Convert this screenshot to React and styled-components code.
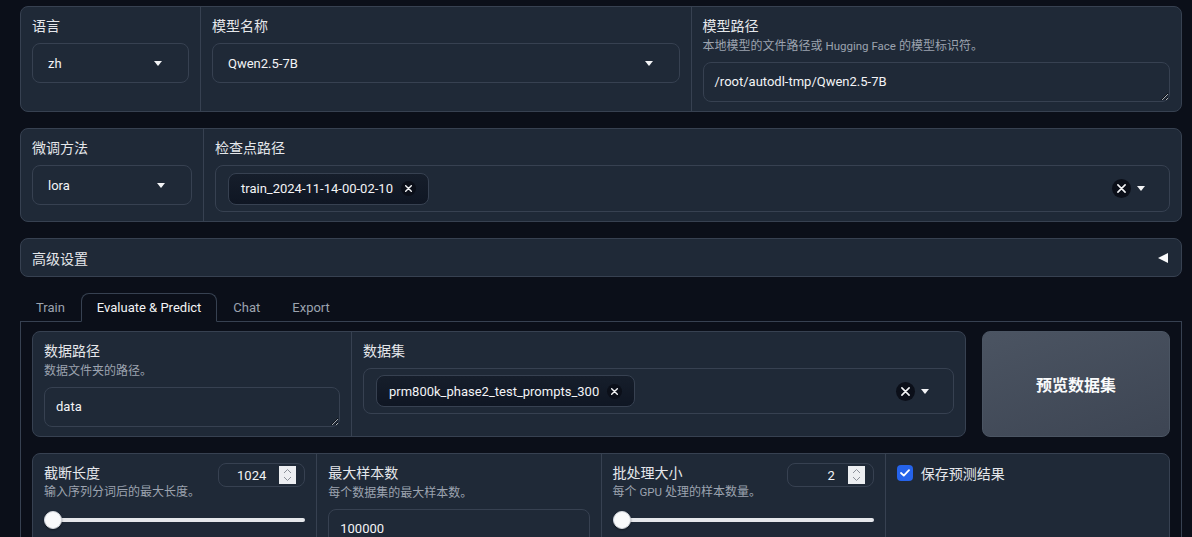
import React from 'react'
import styled, { createGlobalStyle } from 'styled-components'

const GlobalStyle = createGlobalStyle`
  * { box-sizing: border-box; }
  body {
    margin: 0;
    background: #0b0f19;
    font-family: Roboto, "Noto Sans CJK SC", sans-serif;
    color: #e5e7eb;
  }
`

const Page = styled.div`
  height: 537px;
  overflow: hidden;
  padding: 6px 10px 0 20px;
  display: flex;
  flex-direction: column;
  gap: 16px;
  & > * {
    flex-shrink: 0;
  }
`

const Block = styled.div`
  display: flex;
  background: #1f2937;
  border: 1px solid #374151;
  border-radius: 8px;
  overflow: hidden;
  flex: ${props => props.$grow ? '1 1 0' : 'none'};
  min-width: 0;
`

const Col = styled.div`
  flex: ${props => props.$w ? `0 0 ${props.$w}px` : '1 1 0'};
  min-width: 0;
  padding: 9px 11px 9px 11px;
  display: flex;
  flex-direction: column;
  & + & {
    border-left: 1px solid #374151;
  }
`

const Head = styled.div`
  display: flex;
  justify-content: space-between;
  align-items: flex-start;
`

const Label = styled.div`
  font-size: 14px;
  line-height: 20px;
  color: #e5e7eb;
  margin-bottom: ${props => props.$info ? 0 : 7}px;
`

const Info = styled.div`
  font-size: 12px;
  line-height: 16px;
  color: #9ca3af;
  margin-top: ${props => props.$pull ? -3 : 2}px;
  margin-bottom: 8px;
`

const Latin = styled.span`
  font-size: 11.5px;
`

const Select = styled.div`
  height: 40px;
  border: 1px solid #374151;
  border-radius: 8px;
  padding: 0 26px 0 15px;
  display: flex;
  align-items: center;
  justify-content: space-between;
  font-size: 13px;
  color: #f3f4f6;
`

const Caret = styled.span`
  flex: none;
  width: 0;
  height: 0;
  border-left: 4.5px solid transparent;
  border-right: 4.5px solid transparent;
  border-top: 5px solid #f3f4f6;
  margin-left: ${props => props.$gap || 0}px;
`

const TextArea = styled.textarea`
  display: block;
  width: 100%;
  height: 40px;
  min-height: 40px;
  background: #1f2937;
  border: 1px solid #374151;
  border-radius: 8px;
  padding: 9px 11px;
  font: inherit;
  font-size: 13px;
  line-height: 20px;
  color: #f3f4f6;
  resize: vertical;
  outline: none;
  color-scheme: dark;
  overflow: hidden;
`

const Multi = styled.div`
  height: ${props => props.$h}px;
  border: 1px solid #374151;
  border-radius: 8px;
  padding: 0 24px 0 12px;
  display: flex;
  align-items: center;
`

const Chip = styled.div`
  height: 32px;
  display: flex;
  align-items: center;
  gap: 8px;
  padding: 0 12px;
  border: 1px solid #374151;
  border-radius: 8px;
  background: linear-gradient(180deg, #161e2b, #0f1623);
  font-size: 13px;
  color: #f3f4f6;
`

const ChipX = styled.span`
  width: 15px;
  height: 15px;
  border-radius: 50%;
  background: #0b0f19;
  display: flex;
  align-items: center;
  justify-content: center;
`

const ClearAll = styled.span`
  margin-left: auto;
  width: 19px;
  height: 19px;
  border-radius: 50%;
  background: #0b0f19;
  display: flex;
  align-items: center;
  justify-content: center;
`

const Accordion = styled.div`
  height: 39px;
  background: #1f2937;
  border: 1px solid #374151;
  border-radius: 8px;
  padding: 0 13px 0 11px;
  display: flex;
  align-items: center;
  justify-content: space-between;
  font-size: 14px;
`

const LeftArrow = styled.span`
  width: 0;
  height: 0;
  border-top: 5.5px solid transparent;
  border-bottom: 5.5px solid transparent;
  border-right: 10px solid #f9fafb;
`

const Tabs = styled.div`
  display: flex;
  flex-direction: column;
`

const TabNav = styled.div`
  display: flex;
  align-items: flex-start;
  height: 29px;
  border-bottom: 1px solid #374151;
`

const Tab = styled.div`
  height: ${props => props.$active ? 29 : 28}px;
  padding: 0 15px;
  display: flex;
  align-items: center;
  font-size: 13px;
  color: ${props => props.$active ? '#f3f4f6' : '#9ca3af'};
  border: 1px solid ${props => props.$active ? '#374151' : 'transparent'};
  border-bottom: ${props => props.$active ? '1px solid #0b0f19' : 'none'};
  border-radius: 8px 8px 0 0;
  background: ${props => props.$active ? '#0b0f19' : 'transparent'};
  margin-bottom: ${props => props.$active ? -1 : 0}px;
`

const TabPanel = styled.div`
  border: 1px solid #374151;
  border-top: none;
  padding: 9px 11px 20px 11px;
  display: flex;
  flex-direction: column;
  gap: 16px;
`

const Row = styled.div`
  display: flex;
  gap: 16px;
`

const ActionButton = styled.button`
  flex: 0 0 188px;
  border: 1px solid #4b5563;
  border-radius: 8px;
  background: linear-gradient(160deg, #4b5462 0%, #3d4553 100%);
  color: #f9fafb;
  font-family: inherit;
  font-size: 16px;
  font-weight: 700;
`

const NumberBox = styled.div`
  width: 87px;
  height: 24px;
  border: 1px solid #374151;
  border-radius: 8px;
  display: flex;
  align-items: center;
  justify-content: flex-end;
  padding-right: 8px;
  gap: 13px;
  font-size: 13px;
  color: #f3f4f6;
`

const Spinner = styled.span`
  width: 17px;
  height: 18px;
  background: #eceef1;
  display: flex;
  align-items: center;
  justify-content: center;
`

const SliderWrap = styled.div`
  margin-top: 2px;
  height: 20px;
  position: relative;
  display: flex;
  align-items: center;
`

const Track = styled.div`
  width: 100%;
  height: 4px;
  border-radius: 2px;
  background: linear-gradient(90deg, #2563eb 0 6px, #e5e7eb 6px);
`

const Thumb = styled.span`
  position: absolute;
  left: 0;
  top: 1px;
  width: 18px;
  height: 18px;
  border-radius: 50%;
  background: #f9fafb;
  border: 1px solid #d1d5db;
  box-shadow: 0 1px 2px rgba(0, 0, 0, 0.4);
`

const CheckRow = styled.label`
  display: flex;
  align-items: center;
  gap: 8px;
  height: 20px;
  font-size: 14px;
  color: #e5e7eb;
`

const CheckBox = styled.span`
  width: 16px;
  height: 16px;
  border-radius: 4px;
  background: #2563eb;
  display: flex;
  align-items: center;
  justify-content: center;
`

function XMark({ size = 7, width = 1.6 }) {
  return (
    <svg width={size} height={size} viewBox="0 0 10 10">
      <path d="M1 1L9 9M9 1L1 9" stroke="#f3f4f6" strokeWidth={width * 10 / size} strokeLinecap="round" />
    </svg>
  )
}

function Dropdown({ value }) {
  return (
    <Select>
      <span>{value}</span>
      <Caret />
    </Select>
  )
}

function MultiSelect({ value, height }) {
  return (
    <Multi $h={height}>
      <Chip>
        {value}
        <ChipX><XMark size={7} width={1.4} /></ChipX>
      </Chip>
      <ClearAll><XMark size={9} width={1.6} /></ClearAll>
      <Caret $gap={6} />
    </Multi>
  )
}

function NumberInput({ value }) {
  return (
    <NumberBox>
      {value}
      <Spinner>
        <svg width="9" height="14" viewBox="0 0 9 14">
          <path d="M1 5L4.5 1.5L8 5M1 9L4.5 12.5L8 9" stroke="#8b9099" strokeWidth="1" fill="none" />
        </svg>
      </Spinner>
    </NumberBox>
  )
}

function Slider() {
  return (
    <SliderWrap>
      <Track />
      <Thumb />
    </SliderWrap>
  )
}

export default function App() {
  return (
    <>
      <GlobalStyle />
      <Page>
        <Block>
          <Col $w={179}>
            <Label>语言</Label>
            <Dropdown value="zh" />
          </Col>
          <Col>
            <Label>模型名称</Label>
            <Dropdown value="Qwen2.5-7B" />
          </Col>
          <Col>
            <Label $info>模型路径</Label>
            <Info>本地模型的文件路径或 <Latin>Hugging Face</Latin> 的模型标识符。</Info>
            <TextArea readOnly defaultValue="/root/autodl-tmp/Qwen2.5-7B" />
          </Col>
        </Block>

        <Block>
          <Col $w={182}>
            <Label>微调方法</Label>
            <Dropdown value="lora" />
          </Col>
          <Col>
            <Label>检查点路径</Label>
            <MultiSelect value="train_2024-11-14-00-02-10" height={47} />
          </Col>
        </Block>

        <Accordion>
          高级设置
          <LeftArrow />
        </Accordion>

        <Tabs>
          <TabNav>
            <Tab>Train</Tab>
            <Tab $active>Evaluate &amp; Predict</Tab>
            <Tab>Chat</Tab>
            <Tab>Export</Tab>
          </TabNav>
          <TabPanel>
            <Row>
              <Block $grow>
                <Col $w={318}>
                  <Label $info>数据路径</Label>
                  <Info>数据文件夹的路径。</Info>
                  <TextArea readOnly defaultValue="data" />
                </Col>
                <Col>
                  <Label>数据集</Label>
                  <MultiSelect value="prm800k_phase2_test_prompts_300" height={46} />
                </Col>
              </Block>
              <ActionButton>预览数据集</ActionButton>
            </Row>

            <Block>
              <Col>
                <Head>
                  <Label $info>截断长度</Label>
                  <NumberInput value="1024" />
                </Head>
                <Info $pull>输入序列分词后的最大长度。</Info>
                <Slider />
              </Col>
              <Col>
                <Label $info>最大样本数</Label>
                <Info>每个数据集的最大样本数。</Info>
                <TextArea readOnly defaultValue="100000" />
              </Col>
              <Col>
                <Head>
                  <Label $info>批处理大小</Label>
                  <NumberInput value="2" />
                </Head>
                <Info $pull>每个 <Latin>GPU</Latin> 处理的样本数量。</Info>
                <Slider />
              </Col>
              <Col>
                <CheckRow>
                  <CheckBox>
                    <svg width="10" height="8" viewBox="0 0 10 8">
                      <path d="M1 4L3.8 6.6L9 1.2" stroke="#fff" strokeWidth="1.8" fill="none" strokeLinecap="round" strokeLinejoin="round" />
                    </svg>
                  </CheckBox>
                  保存预测结果
                </CheckRow>
              </Col>
            </Block>
          </TabPanel>
        </Tabs>
      </Page>
    </>
  )
}
